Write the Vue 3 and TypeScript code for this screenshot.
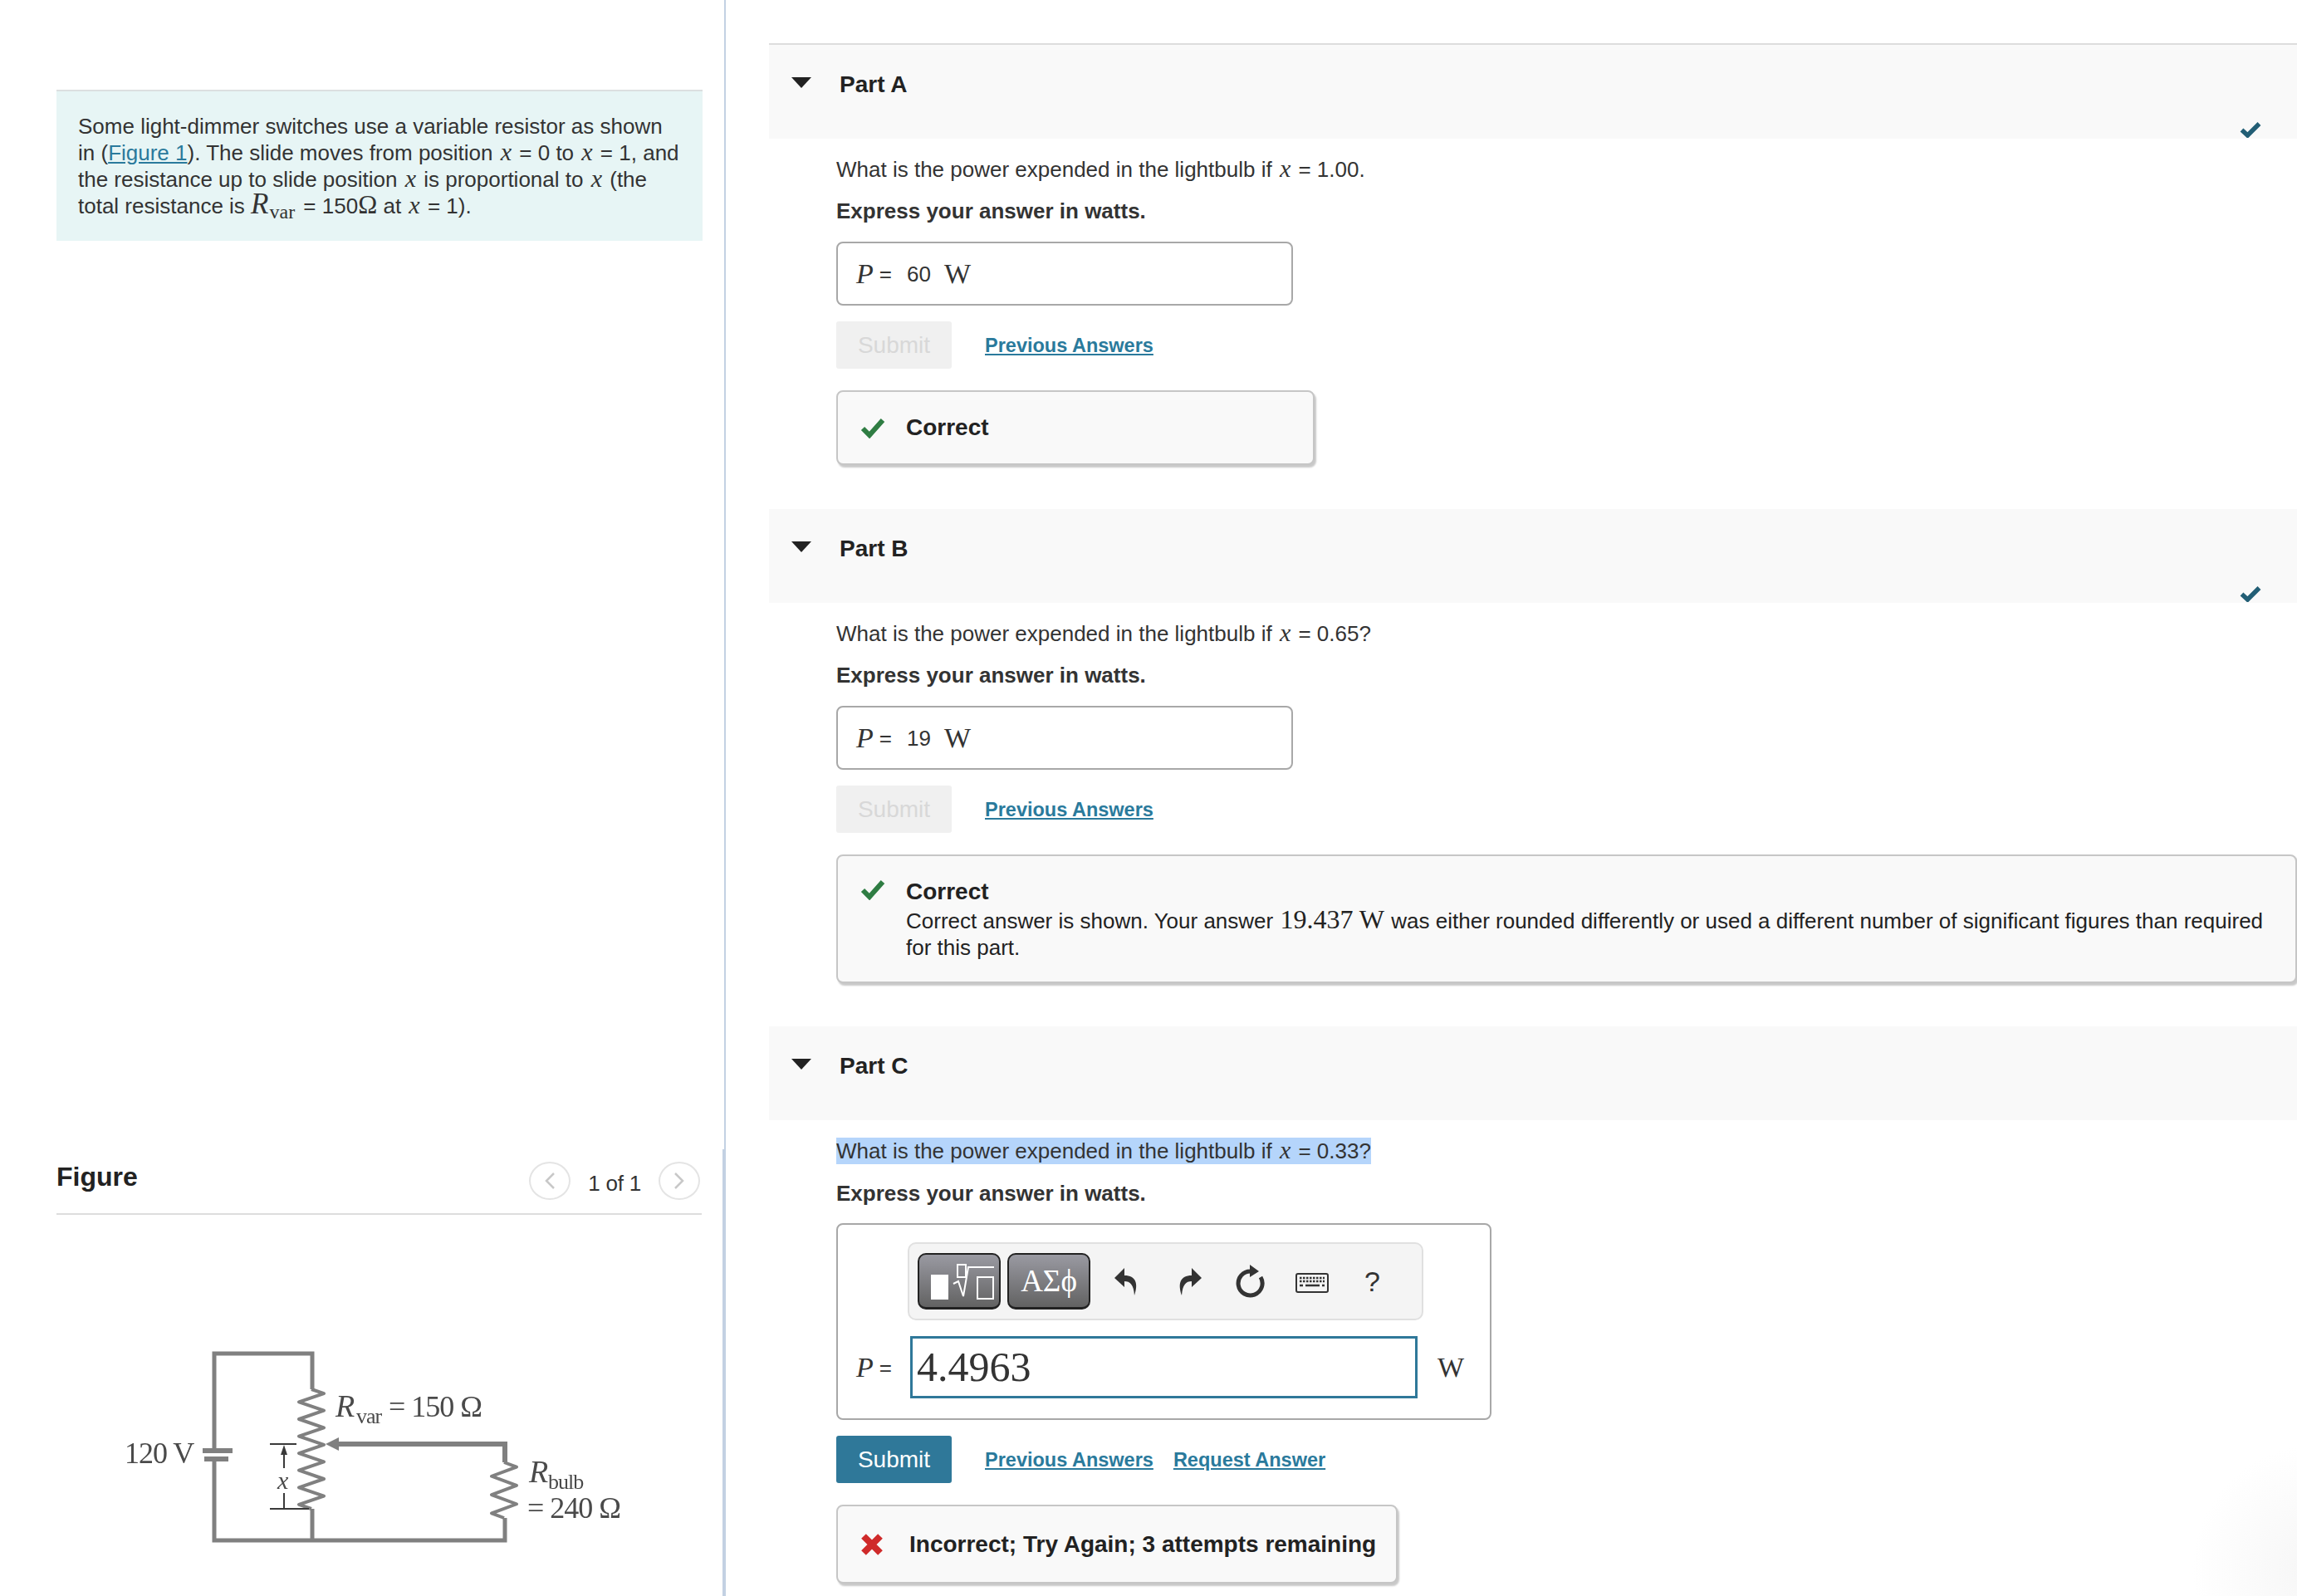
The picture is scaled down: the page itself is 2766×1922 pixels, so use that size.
<script setup lang="ts">
function zigzag(x: number, y0: number, y1: number, amp: number, peaks: number): string {
  const pts: string[] = [`${x},${y0}`]
  const step = (y1 - y0) / (peaks * 2)
  for (let i = 0; i < peaks * 2; i++) {
    const side = i % 2 === 0 ? 1 : -1
    pts.push(`${x + side * amp},${y0 + step * (i + 0.5)}`)
  }
  pts.push(`${x},${y1}`)
  return pts.join(' ')
}
const resistorVar = zigzag(375, 1673, 1817, 15, 7)
const resistorBulb = zigzag(607, 1761, 1828, 15, 3)
</script>

<template>
  <div class="page">
    <aside class="left">
      <section class="intro">
        <div class="prompt">
          Some light-dimmer switches use a variable resistor as shown<br />
          in (<a class="link plain">Figure 1</a>). The slide moves from position <i class="m">x</i> = 0 to <i class="m">x</i> = 1, and<br />
          the resistance up to slide position <i class="m">x</i> is proportional to <i class="m">x</i> (the<br />
          total resistance is <span class="rvar"><i class="m big">R</i><sub>var</sub></span> = 150<span class="ohm">Ω</span> at <i class="m">x</i> = 1).
        </div>
      </section>
      <section class="figure">
        <header class="fig-head">
          <h2>Figure</h2>
          <div class="pager">
            <span class="circle"><svg width="14" height="22" viewBox="0 0 14 22"><path d="M12 2 3 11l9 9" /></svg></span>
            <span class="count">1 of 1</span>
            <span class="circle"><svg width="14" height="22" viewBox="0 0 14 22"><path d="M2 2l9 9-9 9" /></svg></span>
          </div>
        </header>
        <svg class="circuit" width="778" height="422" viewBox="68 1500 778 422">
          <g fill="none" stroke="#808080" stroke-width="5">
            <path d="M258 1747V1630H376V1673" />
            <path d="M258 1757V1855H608V1828" />
            <path d="M376 1817V1855" />
            <path d="M400 1739H608V1761" stroke-width="6" />
            <polyline :points="resistorVar" stroke-width="4" stroke-linejoin="round" />
            <polyline :points="resistorBulb" stroke-width="4" stroke-linejoin="round" />
            <path d="M244 1747H280M246 1757H275" stroke-width="6" />
          </g>
          <path d="M392 1739 l16 -8 v16z" fill="#808080" />
          <g fill="none" stroke="#3a3a3a" stroke-width="2">
            <path d="M325 1739H357M325 1817H372M342 1745V1768M342 1798V1817" />
          </g>
          <path d="M342 1740l-4 12h8z" fill="#3a3a3a" />
          <g class="fig-text">
            <text x="150" y="1762">120 V</text>
            <text x="404" y="1706" class="it">R</text>
            <text x="429" y="1714" class="sub">var</text>
            <text x="468" y="1706">= 150 Ω</text>
            <text x="334" y="1793" class="it small">x</text>
            <text x="637" y="1785" class="it">R</text>
            <text x="660" y="1793" class="sub">bulb</text>
            <text x="635" y="1828">= 240 Ω</text>
          </g>
        </svg>
      </section>
    </aside>

    <main class="right">
      <section class="part first">
        <header class="part-head">
          <span class="tri"></span>
          <h3>Part A</h3>
          <svg class="done" width="26" height="20" viewBox="0 0 26 20"><path d="M2.5 10.5 9.5 17 23.5 3" /></svg>
        </header>
        <div class="body">
          <p class="q">What is the power expended in the lightbulb if <i class="m">x</i> = 1.00.</p>
          <p class="ex">Express your answer in watts.</p>
          <div class="ans"><i class="p">P</i><span class="eq">=</span><span class="val">60</span><span class="unit">W</span></div>
          <div class="actions">
            <button class="submit off">Submit</button>
            <a class="link">Previous Answers</a>
          </div>
          <div class="fb fb-a">
            <svg class="ok" width="30" height="26" viewBox="0 0 30 26"><path d="M3 14 11 22 27 4" /></svg>
            <strong>Correct</strong>
          </div>
        </div>
      </section>

      <section class="part second">
        <header class="part-head">
          <span class="tri"></span>
          <h3>Part B</h3>
          <svg class="done" width="26" height="20" viewBox="0 0 26 20"><path d="M2.5 10.5 9.5 17 23.5 3" /></svg>
        </header>
        <div class="body">
          <p class="q">What is the power expended in the lightbulb if <i class="m">x</i> = 0.65?</p>
          <p class="ex">Express your answer in watts.</p>
          <div class="ans"><i class="p">P</i><span class="eq">=</span><span class="val">19</span><span class="unit">W</span></div>
          <div class="actions">
            <button class="submit off">Submit</button>
            <a class="link">Previous Answers</a>
          </div>
          <div class="fb fb-b">
            <svg class="ok" width="30" height="26" viewBox="0 0 30 26"><path d="M3 14 11 22 27 4" /></svg>
            <div class="fb-text">
              <strong>Correct</strong>
              <div>Correct answer is shown. Your answer <span class="num">19.437 W</span> was either rounded differently or used a different number of significant figures than required for this part.</div>
            </div>
          </div>
        </div>
      </section>

      <section class="part third">
        <header class="part-head">
          <span class="tri"></span>
          <h3>Part C</h3>
        </header>
        <div class="body">
          <p class="q"><span class="sel">What is the power expended in the lightbulb if <i class="m">x</i> = 0.33?</span></p>
          <p class="ex">Express your answer in watts.</p>
          <div class="editor">
            <div class="toolbar">
              <button class="tb-btn">
                <svg width="96" height="64" viewBox="0 0 96 64">
                  <rect x="14" y="24" width="21" height="30" fill="#fff" />
                  <g fill="none" stroke="#fff" stroke-width="2">
                    <rect x="46" y="12" width="10" height="15" />
                    <rect x="70" y="27" width="19" height="26" />
                    <path d="M41 35l6-3 6 18 6-35h31" />
                  </g>
                </svg>
              </button>
              <button class="tb-btn greek">ΑΣϕ</button>
              <svg class="ico undo" width="30" height="34" viewBox="0 0 30 34"><path d="M13 1 1 13l12 11v-7c7 0 11 4 12 17 5-14 2-24-12-24z" /></svg>
              <svg class="ico redo" width="30" height="34" viewBox="0 0 30 34"><path d="M17 1l12 12-12 11v-7C10 17 6 21 5 34 0 20 3 10 17 10z" /></svg>
              <svg class="ico reset" width="36" height="40" viewBox="0 0 36 40"><path class="arc" d="M18 8A14.5 14.5 0 1 0 30 15" /><path d="M17 0l11 8-11 7z" /></svg>
              <svg class="ico keys" width="40" height="24" viewBox="0 0 40 24">
                <rect x="1" y="1" width="38" height="22" rx="2" fill="none" stroke="#333" stroke-width="2" />
                <path d="M5 6h30M5 10h30" stroke="#333" stroke-width="2.4" stroke-dasharray="2.5 1.5" />
                <path d="M5 15h4M12 15h17M32 15h3" stroke="#333" stroke-width="2.4" />
              </svg>
              <span class="help">?</span>
            </div>
            <div class="entry">
              <i class="p">P</i><span class="eq">=</span>
              <div class="field">4.4963</div>
              <span class="unit">W</span>
            </div>
          </div>
          <div class="actions">
            <button class="submit">Submit</button>
            <a class="link">Previous Answers</a>
            <a class="link">Request Answer</a>
          </div>
          <div class="fb fb-c">
            <svg class="no" width="28" height="28" viewBox="0 0 28 28"><path d="M4 4 24 24M24 4 4 24" /></svg>
            <strong>Incorrect; Try Again; 3 attempts remaining</strong>
          </div>
        </div>
      </section>
    </main>
  </div>
</template>

<style>
html, body { margin: 0; background: #fff; }
</style>

<style scoped>
* { box-sizing: border-box; }
.page {
  display: flex;
  width: 2766px;
  height: 1922px;
  overflow: hidden;
  font-family: "Liberation Sans", Arial, sans-serif;
  font-size: 26px;
  line-height: 32px;
  color: #333;
  background: radial-gradient(circle 150px at 2790px 1890px, #f6f6f6, #fff);
}
.left { width: 874px; display: flex; flex-direction: column; flex: none; }
.intro { height: 1384px; padding: 108px 26px 0 68px; border-right: 2px solid #c3d1e3; }
.prompt {
  width: 778px;
  height: 182px;
  border-top: 2px solid #dcdfe0;
  background: #e7f5f5;
  padding: 26px 0 0 26px;
  white-space: nowrap;
}
.m { font-family: "Liberation Serif", serif; font-size: 30px; line-height: 0; padding: 0 2px; }
.big { font-size: 35px; padding: 0 1px 0 0; }
.rvar { margin-right: 3px; }
.rvar sub { font-family: "Liberation Serif", serif; font-size: 24px; line-height: 0; vertical-align: -6px; }
.ohm { font-family: "Liberation Serif", serif; font-size: 31px; line-height: 0; }
.link { color: #2a7a9c; text-decoration: underline; font-weight: 700; font-size: 23.5px; }
.link.plain { font-weight: 400; font-size: 26px; }
.figure { flex: 1; border-right: 4px solid #c3d1e3; padding: 0 25px 0 68px; }
.fig-head {
  height: 79px;
  border-bottom: 2px solid #ddd;
  display: flex;
  align-items: flex-start;
  justify-content: space-between;
  padding-top: 13px;
}
.fig-head h2 { margin: 0; font-size: 32px; line-height: 40px; font-weight: 700; color: #222; }
.pager { display: flex; align-items: center; padding: 2px 2px 0 0; }
.circle {
  width: 50px; height: 46px;
  border: 2px solid #e4e4e4;
  border-radius: 50%;
  display: flex; align-items: center; justify-content: center;
}
.circle svg path { fill: none; stroke: #c8c8c8; stroke-width: 2.5; }
.count { margin: 6px 21px 0 21px; color: #333; letter-spacing: -0.2px; }
.circuit { display: block; margin-top: 37px; filter: blur(0.5px); }
.fig-text text { font-family: "Liberation Serif", serif; font-size: 36px; fill: #4a4a4a; letter-spacing: -1px; }
.fig-text .it { font-style: italic; font-size: 38px; }
.fig-text .small { font-size: 30px; }
.fig-text .sub { font-size: 26px; }

.right { flex: 1; margin-left: 52px; padding-top: 52px; min-width: 0; }
.second { margin-top: 53px; }
.third { margin-top: 52px; }
.part-head {
  position: relative;
  height: 113px;
  background: #f9f9f9;
  display: flex;
  padding: 32px 0 0 27px;
}
.first .part-head { height: 115px; border-top: 2px solid #ddd; }
.tri {
  width: 0; height: 0;
  margin-top: 7px;
  border-left: 12px solid transparent;
  border-right: 12px solid transparent;
  border-top: 13px solid #222;
}
.part-head h3 { margin: 0 0 0 34px; font-size: 28px; line-height: 32px; font-weight: 700; color: #222; }
.done {
  position: absolute;
  right: 43px;
  bottom: 0;
  transform: translateY(-1px);
}
.done path { fill: none; stroke: #225e75; stroke-width: 5.5; }
.body { padding-left: 81px; }
.q { margin: 21px 0 0; }
.ex { margin: 18px 0 0; font-weight: 700; }
.third .ex { margin-top: 19px; }
.sel { background: #b5d5fb; display: inline-block; }
.ans {
  margin-top: 21px;
  width: 550px;
  height: 77px;
  border: 2px solid #a8a8a8;
  border-radius: 8px;
  display: flex;
  align-items: center;
  padding-left: 22px;
}
.p { font-family: "Liberation Serif", serif; font-size: 34px; }
.eq { font-size: 26px; margin-left: 7px; }
.val { margin-left: 18px; }
.unit { font-family: "Liberation Serif", serif; font-size: 34px; margin-left: 16px; }
.actions { display: flex; align-items: center; margin-top: 19px; height: 57px; }
.submit {
  width: 139px; height: 57px;
  border: 0; border-radius: 3px;
  background: #2f7899;
  color: #fff;
  font: 28px/32px "Liberation Sans", Arial, sans-serif;
  padding: 0;
  margin-right: 40px;
}
.submit.off { background: #f0f0f0; color: #d8d8d8; }
.actions .link + .link { margin-left: 24px; }
.fb {
  margin-top: 26px;
  background: #f9f9f9;
  border: 2px solid #c6c6c6;
  border-radius: 8px;
  box-shadow: 2px 3px 2px #c9c9c9;
  display: flex;
  color: #222;
}
.fb strong { font-size: 28px; }
.fb-a { width: 576px; height: 90px; align-items: center; padding-left: 27px; }
.fb-a .ok { margin-right: 25px; }
.fb-b { height: 155px; padding: 27px 20px 0 27px; }
.fb-b .ok { flex: none; margin: 0 25px 0 0; }
.fb-text { line-height: 32px; font-size: 26px; }
.fb-text > div { margin-top: 2px; }
.fb-text .num { font-family: "Liberation Serif", serif; font-size: 32px; line-height: 30px; margin: 0 1px; display: inline-block; }
.ok path { fill: none; stroke: #2f7d43; stroke-width: 6; }
.no path { fill: none; stroke: #cf2a2a; stroke-width: 8; }
.fb-c { width: 676px; height: 95px; align-items: center; padding-left: 27px; }
.fb-c .no { margin-right: 31px; }
.editor {
  margin-top: 20px;
  width: 789px;
  height: 237px;
  border: 2px solid #a8a8a8;
  border-radius: 8px;
  padding: 21px 0 0 0;
}
.toolbar {
  margin-left: 84px;
  width: 621px;
  height: 94px;
  background: #f4f4f4;
  border: 2px solid #e0e0e0;
  border-radius: 10px;
  display: flex;
  align-items: center;
  padding-left: 10px;
  gap: 8px;
}
.tb-btn {
  width: 100px;
  height: 68px;
  padding: 0;
  border: 2px solid #222;
  border-bottom-width: 3px;
  border-radius: 10px;
  background: linear-gradient(#9a9aa2, #626262);
  color: #fff;
  display: flex; align-items: center; justify-content: center;
}
.greek { font: 37px/1 "Liberation Serif", serif; }
.ico { flex: none; }
.ico path { fill: #333; }
.undo { margin-left: 20px; }
.redo { margin-left: 39px; }
.reset { margin-left: 32px; }
.reset .arc { fill: none; stroke: #333; stroke-width: 5; }
.keys { margin-left: 28px; margin-top: 4px; }
.keys path { fill: none; }
.help { margin-left: 35px; font-size: 34px; color: #333; }
.entry { display: flex; align-items: center; margin-top: 19px; padding-left: 22px; }
.field {
  margin-left: 22px;
  width: 611px;
  height: 75px;
  border: 3px solid #2f7899;
  padding-left: 5px;
  font: 50px/68px "Liberation Serif", serif;
  color: #333;
}
.entry .unit { margin-left: 24px; }
</style>
